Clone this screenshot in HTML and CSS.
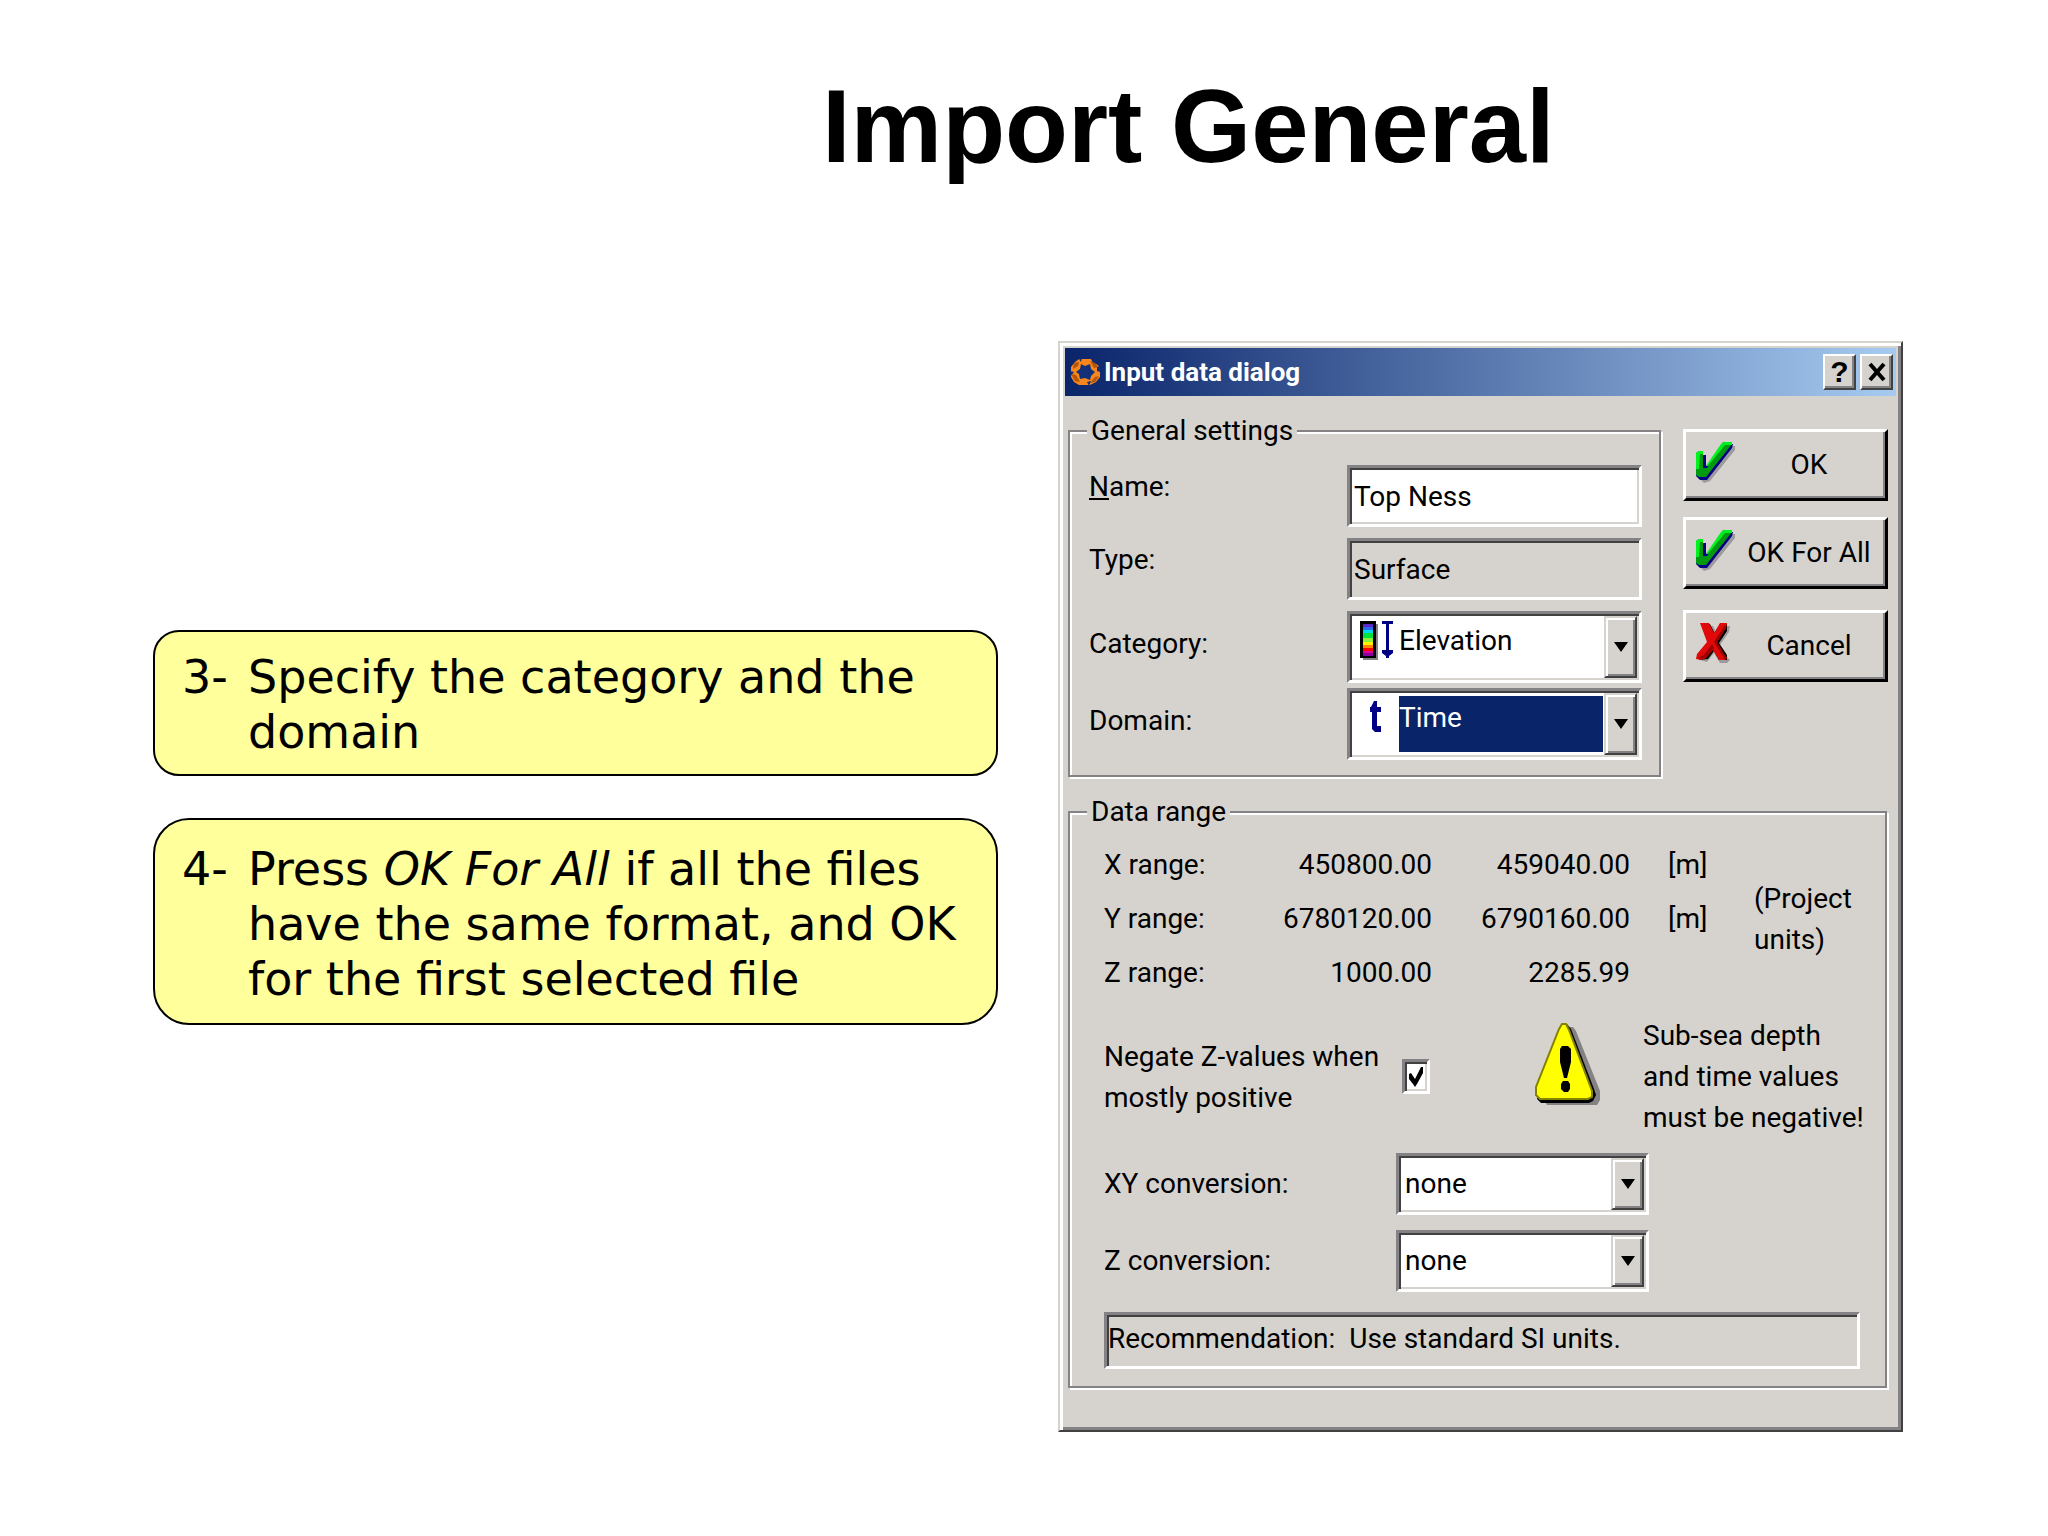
FILE: index.html
```
<!DOCTYPE html>
<html lang="en">

<head>
  <meta charset="utf-8">
  <title>Import General</title>
  <link rel="stylesheet" href="styles.css">
</head>

<body>
  <h1 class="title">Import General</h1>

  <div class="content">
    <!-- Numbered steps -->
    <div class="steps">
      <div class="step">
        <span class="number">3-</span>
        <p>Specify the category and the<br>domain</p>
      </div>
      <div class="step tall">
        <span class="number">4-</span>
        <p>Press <em>OK For All</em> if all the files<br>have the same format, and OK<br>for the first selected file</p>
      </div>
    </div>

    <!-- Dialog window -->
    <form class="dialog">
      <div class="titlebar">
        <svg class="logo" viewBox="0 0 30 28">
          <path fill="#f7861c" d="M9 1h12l2 4 5 2 2 4v8l-4 5-6 3H9l-5-3-3-5V9l4-5z"/>
          <path fill="#b4550c" d="M20 3l5 2 3 4-4 1zM25 19l4-1-4 6-5 1zM1 16l5 1 4 7-5-1zM4 5l5-1-1 4-5 3z"/>
          <path fill="#12307a" d="M11 6l4 2 5-2 1 5 4 3-4 4-1 4-5-2-5 1-1-5-3-2 4-3zM9 1l3-1-1 4zM27 9l3-1v6l-3-1zM19 28l-2-4 4-1zM0 13l4 1-4 5z"/>
        </svg>
        <span class="caption">Input data dialog</span>
        <button type="button" class="small">?</button>
        <button type="button" class="small" aria-label="Close">
          <svg width="18" height="20" viewBox="0 0 18 20"><path d="M2 2l14 16M16 2L2 18" stroke="#000" stroke-width="4"/></svg>
        </button>
      </div>

      <div class="top">
        <fieldset class="general">
          <legend>General settings</legend>
          <div class="row">
            <label for="name"><u>N</u>ame:</label>
            <input type="text" id="name" class="field" value="Top Ness">
          </div>
          <div class="row">
            <label for="type">Type:</label>
            <input type="text" id="type" class="field readonly" value="Surface" readonly>
          </div>
          <div class="row high">
            <label for="category">Category:</label>
            <div class="combo">
              <select id="category" class="field">
                <option>Elevation</option>
              </select>
              <svg class="icon" viewBox="0 0 36 40">
                <path fill="#848284" d="M4 4h15v36H4z"/>
                <path d="M1 1h16v37H1z"/>
                <path fill="#5a28c8" d="M4 4h10v3H4z"/>
                <path fill="#2a6cf0" d="M4 7h10v3H4z"/>
                <path fill="#00d8f0" d="M4 10h10v3H4z"/>
                <path fill="#00e43c" d="M4 13h10v5H4z"/>
                <path fill="#8cf03c" d="M4 18h10v4H4z"/>
                <path fill="#fff000" d="M4 22h10v3H4z"/>
                <path fill="#ff8200" d="M4 25h10v3H4z"/>
                <path fill="#ff0000" d="M4 28h10v3H4z"/>
                <path fill="#e000a0" d="M4 31h10v2H4z"/>
                <path fill="#8c00a0" d="M4 33h10v3H4z"/>
                <path fill="#000084" d="M23 1h11v3h-4v26h4v3l-4 3v2h-3v-2l-4-3v-3h4V4h-4z"/>
              </svg>
              <span class="drop"></span>
            </div>
          </div>
          <div class="row high">
            <label for="domain">Domain:</label>
            <div class="combo">
              <select id="domain" class="field selected">
                <option>Time</option>
              </select>
              <svg class="icon" viewBox="0 0 36 40">
                <path fill="#000084" d="M12 10l3-6h3v6h4v5h-4v14h4v6h-6l-3-3V15h-2v-5z"/>
              </svg>
              <span class="drop"></span>
            </div>
          </div>
        </fieldset>

        <div class="buttons">
          <button type="button" class="push">
            <svg viewBox="0 0 40 42">
              <path fill="#9c9a9c" d="M5 32V15h6v11L32 5h8v4L15 40l-6 2-4-4z"/>
              <path fill="#000084" d="M2 30V14h9v11L30 3h8l-1 4-25 32H5l-4-4z"/>
              <path fill="#009a10" d="M1 34V12l3-2h4v17h4L28 1h9v2L11 36H4z"/>
              <path fill="#00f020" d="M1 28V12l3-2h4v3H5l-1 15zM11 25L26 3l3-2h8v3h-7L13 25z"/>
            </svg>
            <span>OK</span>
          </button>
          <button type="button" class="push">
            <svg viewBox="0 0 40 42">
              <path fill="#9c9a9c" d="M5 32V15h6v11L32 5h8v4L15 40l-6 2-4-4z"/>
              <path fill="#000084" d="M2 30V14h9v11L30 3h8l-1 4-25 32H5l-4-4z"/>
              <path fill="#009a10" d="M1 34V12l3-2h4v17h4L28 1h9v2L11 36H4z"/>
              <path fill="#00f020" d="M1 28V12l3-2h4v3H5l-1 15zM11 25L26 3l3-2h8v3h-7L13 25z"/>
            </svg>
            <span>OK For All</span>
          </button>
          <button type="button" class="push cancel">
            <svg viewBox="0 0 40 42">
              <path fill="#9c9a9c" d="M8 4h10l5 10 5-10h7l-1 6-9 13 7 12 3 3-3 3h-7l-6-10-7 9-7-2 11-15z"/>
              <path d="M6 2h9l5 10 5-10h7v7l-8 12 8 12v5h-8l-5-9-6 8-9 1 1-7 9-11z"/>
              <path fill="#e00808" d="M5 1h9l5 10 6-10h7l-1 5-9 14 7 12 3 4-2 2h-6l-6-10-7 8-5 2-5-1 1-5 10-12z"/>
              <path fill="#9c0000" d="M30 3l1 3-9 14 7 12 3 4-2 2-11-18zM17 22l2 4-7 9-5 2-4-1 6-3z"/>
            </svg>
            <span>Cancel</span>
          </button>
        </div>
      </div>

      <fieldset class="data">
        <legend>Data range</legend>
        <table class="ranges">
          <tr>
            <th>X range:</th>
            <td>450800.00</td>
            <td>459040.00</td>
            <td class="unit">[m]</td>
            <td class="project" rowspan="3">(Project<br>units)</td>
          </tr>
          <tr>
            <th>Y range:</th>
            <td>6780120.00</td>
            <td>6790160.00</td>
            <td class="unit">[m]</td>
          </tr>
          <tr>
            <th>Z range:</th>
            <td>1000.00</td>
            <td>2285.99</td>
            <td></td>
          </tr>
        </table>

        <div class="negate">
          <label for="negate">Negate Z-values when<br>mostly positive</label>
          <div class="check">
            <input type="checkbox" id="negate" checked>
            <svg viewBox="0 0 16 22"><path d="M1 8l2-1 4 6 6-12h2v6L9 18l-2 3-2-3-4-5z"/></svg>
          </div>
          <svg class="warning" viewBox="0 0 66 82">
            <path fill="#848284" d="M32 4h6l3 4 24 60v9l-3 5H12l-4-6z"/>
            <path d="M27 1h5l4 5 23 60 2 6-3 6-4 2H6l-4-4z"/>
            <path fill="#ffff00" stroke="#848200" stroke-width="2" d="M27 1h4l3 6 23 61v6l-4 2H5l-4-4v-8L24 6z"/>
            <path d="M27 23h6l3 3v13l-4 16h-3l-4-16V26z"/>
            <path d="M28 58h5l2 3v5l-2 3h-4l-3-3v-5z"/>
          </svg>
          <p>Sub-sea depth<br>and time values<br>must be negative!</p>
        </div>

        <div class="conversion">
          <label for="xy">XY conversion:</label>
          <div class="combo">
            <select id="xy" class="field">
              <option>none</option>
            </select>
            <span class="drop"></span>
          </div>
        </div>
        <div class="conversion">
          <label for="z">Z conversion:</label>
          <div class="combo">
            <select id="z" class="field">
              <option>none</option>
            </select>
            <span class="drop"></span>
          </div>
        </div>

        <div class="recommendation">Recommendation:&nbsp; Use standard SI units.</div>
      </fieldset>
    </form>
  </div>
</body>

</html>
```

FILE: styles.css
```
* {
  box-sizing: border-box;
}

body {
  margin: 0;
  padding: 70px 145px 80px 153px;
  background: #fff;
  color: #000;
  font-family: "Liberation Sans", Arial, sans-serif;
}

h1, p {
  margin: 0;
}

.title {
  margin-left: 669px;
  font-size: 103px;
  line-height: 114px;
  white-space: nowrap;
}

.content {
  display: grid;
  grid-template-columns: 1fr 1fr;
  gap: 60px;
  margin-top: 157px;
}

/* Yellow step boxes */

.steps {
  display: flex;
  flex-direction: column;
  gap: 42px;
  padding-top: 289px;
}

.step {
  display: flex;
  padding: 18px 20px 14px 27px;
  border: 2px solid #000;
  border-radius: 26px;
  background: #ffff9c;
  font-family: "DejaVu Sans", Verdana, sans-serif;
  font-size: 46px;
  line-height: 55px;
}

.step.tall {
  padding-top: 22px;
  padding-bottom: 16px;
  border-radius: 36px;
}

.number {
  flex: 0 0 66px;
}

/* Dialog window */

.dialog {
  padding: 5px;
  border: 2px solid;
  border-color: #d6d3ce #424142 #424142 #d6d3ce;
  box-shadow: inset 3px 3px 0 #fff, inset -3px -3px 0 #848284;
  background: #d6d3ce;
  font-family: Roboto, "Liberation Sans", sans-serif;
  font-size: 28px;
  line-height: 40px;
}

.titlebar {
  display: flex;
  align-items: center;
  gap: 4px;
  height: 48px;
  padding: 0 3px 0 5px;
  background: linear-gradient(to right, #0a246a, #a6caf0);
}

.logo {
  width: 30px;
  height: 28px;
}

.caption {
  flex: 1;
  color: #fff;
  font-size: 26px;
  font-weight: bold;
}

.small {
  display: flex;
  align-items: center;
  justify-content: center;
  width: 33px;
  height: 36px;
  padding: 0;
  border: 2px solid;
  border-color: #fff #424142 #424142 #fff;
  box-shadow: inset -2px -2px 0 #848284;
  background: #d6d3ce;
  color: #000;
  font: bold 30px "Liberation Sans", Arial, sans-serif;
}

.top {
  display: grid;
  grid-template-columns: 1fr 205px;
  align-items: start;
  gap: 22px;
  padding: 15px 8px 15px 3px;
}

fieldset {
  min-width: 0;
  margin: 0;
  border: 2px solid #848284;
  box-shadow: inset 2px 2px 0 #fff, 2px 2px 0 #fff;
}

legend {
  padding: 0 4px;
  background: #d6d3ce;
}

.general {
  padding: 14px 17px 15px 19px;
}

.general legend {
  margin-left: -2px;
}

.row {
  display: grid;
  grid-template-columns: 258px 1fr;
  align-items: start;
  margin-bottom: 11px;
}

.row label {
  padding-top: 2px;
}

.row.high {
  margin-bottom: 5px;
}

.row.high label {
  padding-top: 13px;
}

.row:last-child {
  margin-bottom: 0;
}

/* Sunken text boxes and drop-downs */

.field {
  width: 100%;
  height: 62px;
  margin: 0;
  padding: 0 6px 0 4px;
  border: 3px solid;
  border-color: #848284 #fff #fff #848284;
  border-radius: 0;
  outline: none;
  box-shadow: inset 2px 2px 0 #424142, inset -2px -2px 0 #d6d3ce;
  background: #fff;
  color: #000;
  font: inherit;
  appearance: none;
}

.readonly {
  background: #d6d3ce;
}

.combo {
  display: grid;
}

.combo > * {
  grid-area: 1 / 1;
}

.combo .field {
  padding-left: 6px;
}

.high .field {
  height: 72px;
  padding-left: 49px;
  padding-bottom: 12px;
}

.high .selected {
  background: linear-gradient(#0a246a, #0a246a) 49px 5px / calc(100% - 85px) 56px no-repeat #fff;
  color: #fff;
}

.icon {
  width: 36px;
  height: 40px;
  margin: 9px 0 0 12px;
  pointer-events: none;
}

.drop {
  display: flex;
  align-items: center;
  justify-content: center;
  justify-self: end;
  width: 33px;
  margin: 5px 5px 5px 0;
  border: 2px solid;
  border-color: #d6d3ce #424142 #424142 #d6d3ce;
  box-shadow: inset 2px 2px 0 #fff, inset -2px -2px 0 #848284;
  background: #d6d3ce;
  pointer-events: none;
}

.drop::after {
  content: "";
  border: 7px solid transparent;
  border-top: 10px solid #000;
  border-bottom: 0;
}

/* Push buttons */

.buttons {
  display: flex;
  flex-direction: column;
  gap: 16px;
  padding-top: 18px;
}

.push {
  display: flex;
  align-items: center;
  width: 100%;
  height: 72px;
  padding: 0 10px 0 9px;
  border: 3px solid;
  border-color: #fff #000 #000 #fff;
  box-shadow: inset -2px -2px 0 #848284;
  background: #d6d3ce;
  color: #000;
  font: inherit;
}

.push.cancel {
  margin-top: 5px;
}

.push svg {
  flex: none;
  width: 40px;
  height: 42px;
  margin-bottom: 6px;
}

.push span {
  flex: 1;
  padding-left: 8px;
  text-align: center;
  white-space: nowrap;
}

/* Data range group */

.data {
  margin: 0 9px 37px 3px;
  padding: 13px 25px 17px 34px;
}

.data legend {
  margin-left: -17px;
}

.ranges {
  width: 100%;
  border-collapse: collapse;
  table-layout: fixed;
}

.ranges th, .ranges td {
  height: 54px;
  padding: 0;
  font-weight: normal;
  text-align: right;
  vertical-align: top;
}

.ranges th {
  width: 130px;
  text-align: left;
}

.ranges td {
  width: 198px;
}

.ranges tr:last-child th, .ranges tr:last-child td {
  height: 40px;
}

.ranges .unit {
  width: 124px;
  padding-left: 38px;
  text-align: left;
}

.ranges .project {
  width: auto;
  line-height: 41px;
  text-align: left;
  vertical-align: middle;
}

.negate {
  display: grid;
  grid-template-columns: 298px 133px 108px 1fr;
  align-items: center;
  margin-top: 22px;
  margin-right: -20px;
  line-height: 41px;
}

.check {
  display: grid;
  width: 28px;
  height: 35px;
}

.check > * {
  grid-area: 1 / 1;
}

.check input {
  width: 28px;
  height: 35px;
  margin: 0;
  border: 3px solid;
  border-color: #848284 #fff #fff #848284;
  box-shadow: inset 2px 2px 0 #424142, inset -2px -2px 0 #d6d3ce;
  background: #fff;
  appearance: none;
}

.check svg {
  place-self: center;
  width: 16px;
  height: 22px;
  pointer-events: none;
}

.check input:not(:checked) + svg {
  display: none;
}

.warning {
  align-self: start;
  width: 66px;
  height: 82px;
  margin-top: 8px;
}

.conversion {
  display: grid;
  grid-template-columns: 292px 253px;
  align-items: center;
  margin-top: 15px;
}

.recommendation {
  margin-top: 20px;
  padding: 4px 1px 7px;
  border: 3px solid;
  border-color: #848284 #fff #fff #848284;
  box-shadow: inset 2px 2px 0 #424142;
}
```
